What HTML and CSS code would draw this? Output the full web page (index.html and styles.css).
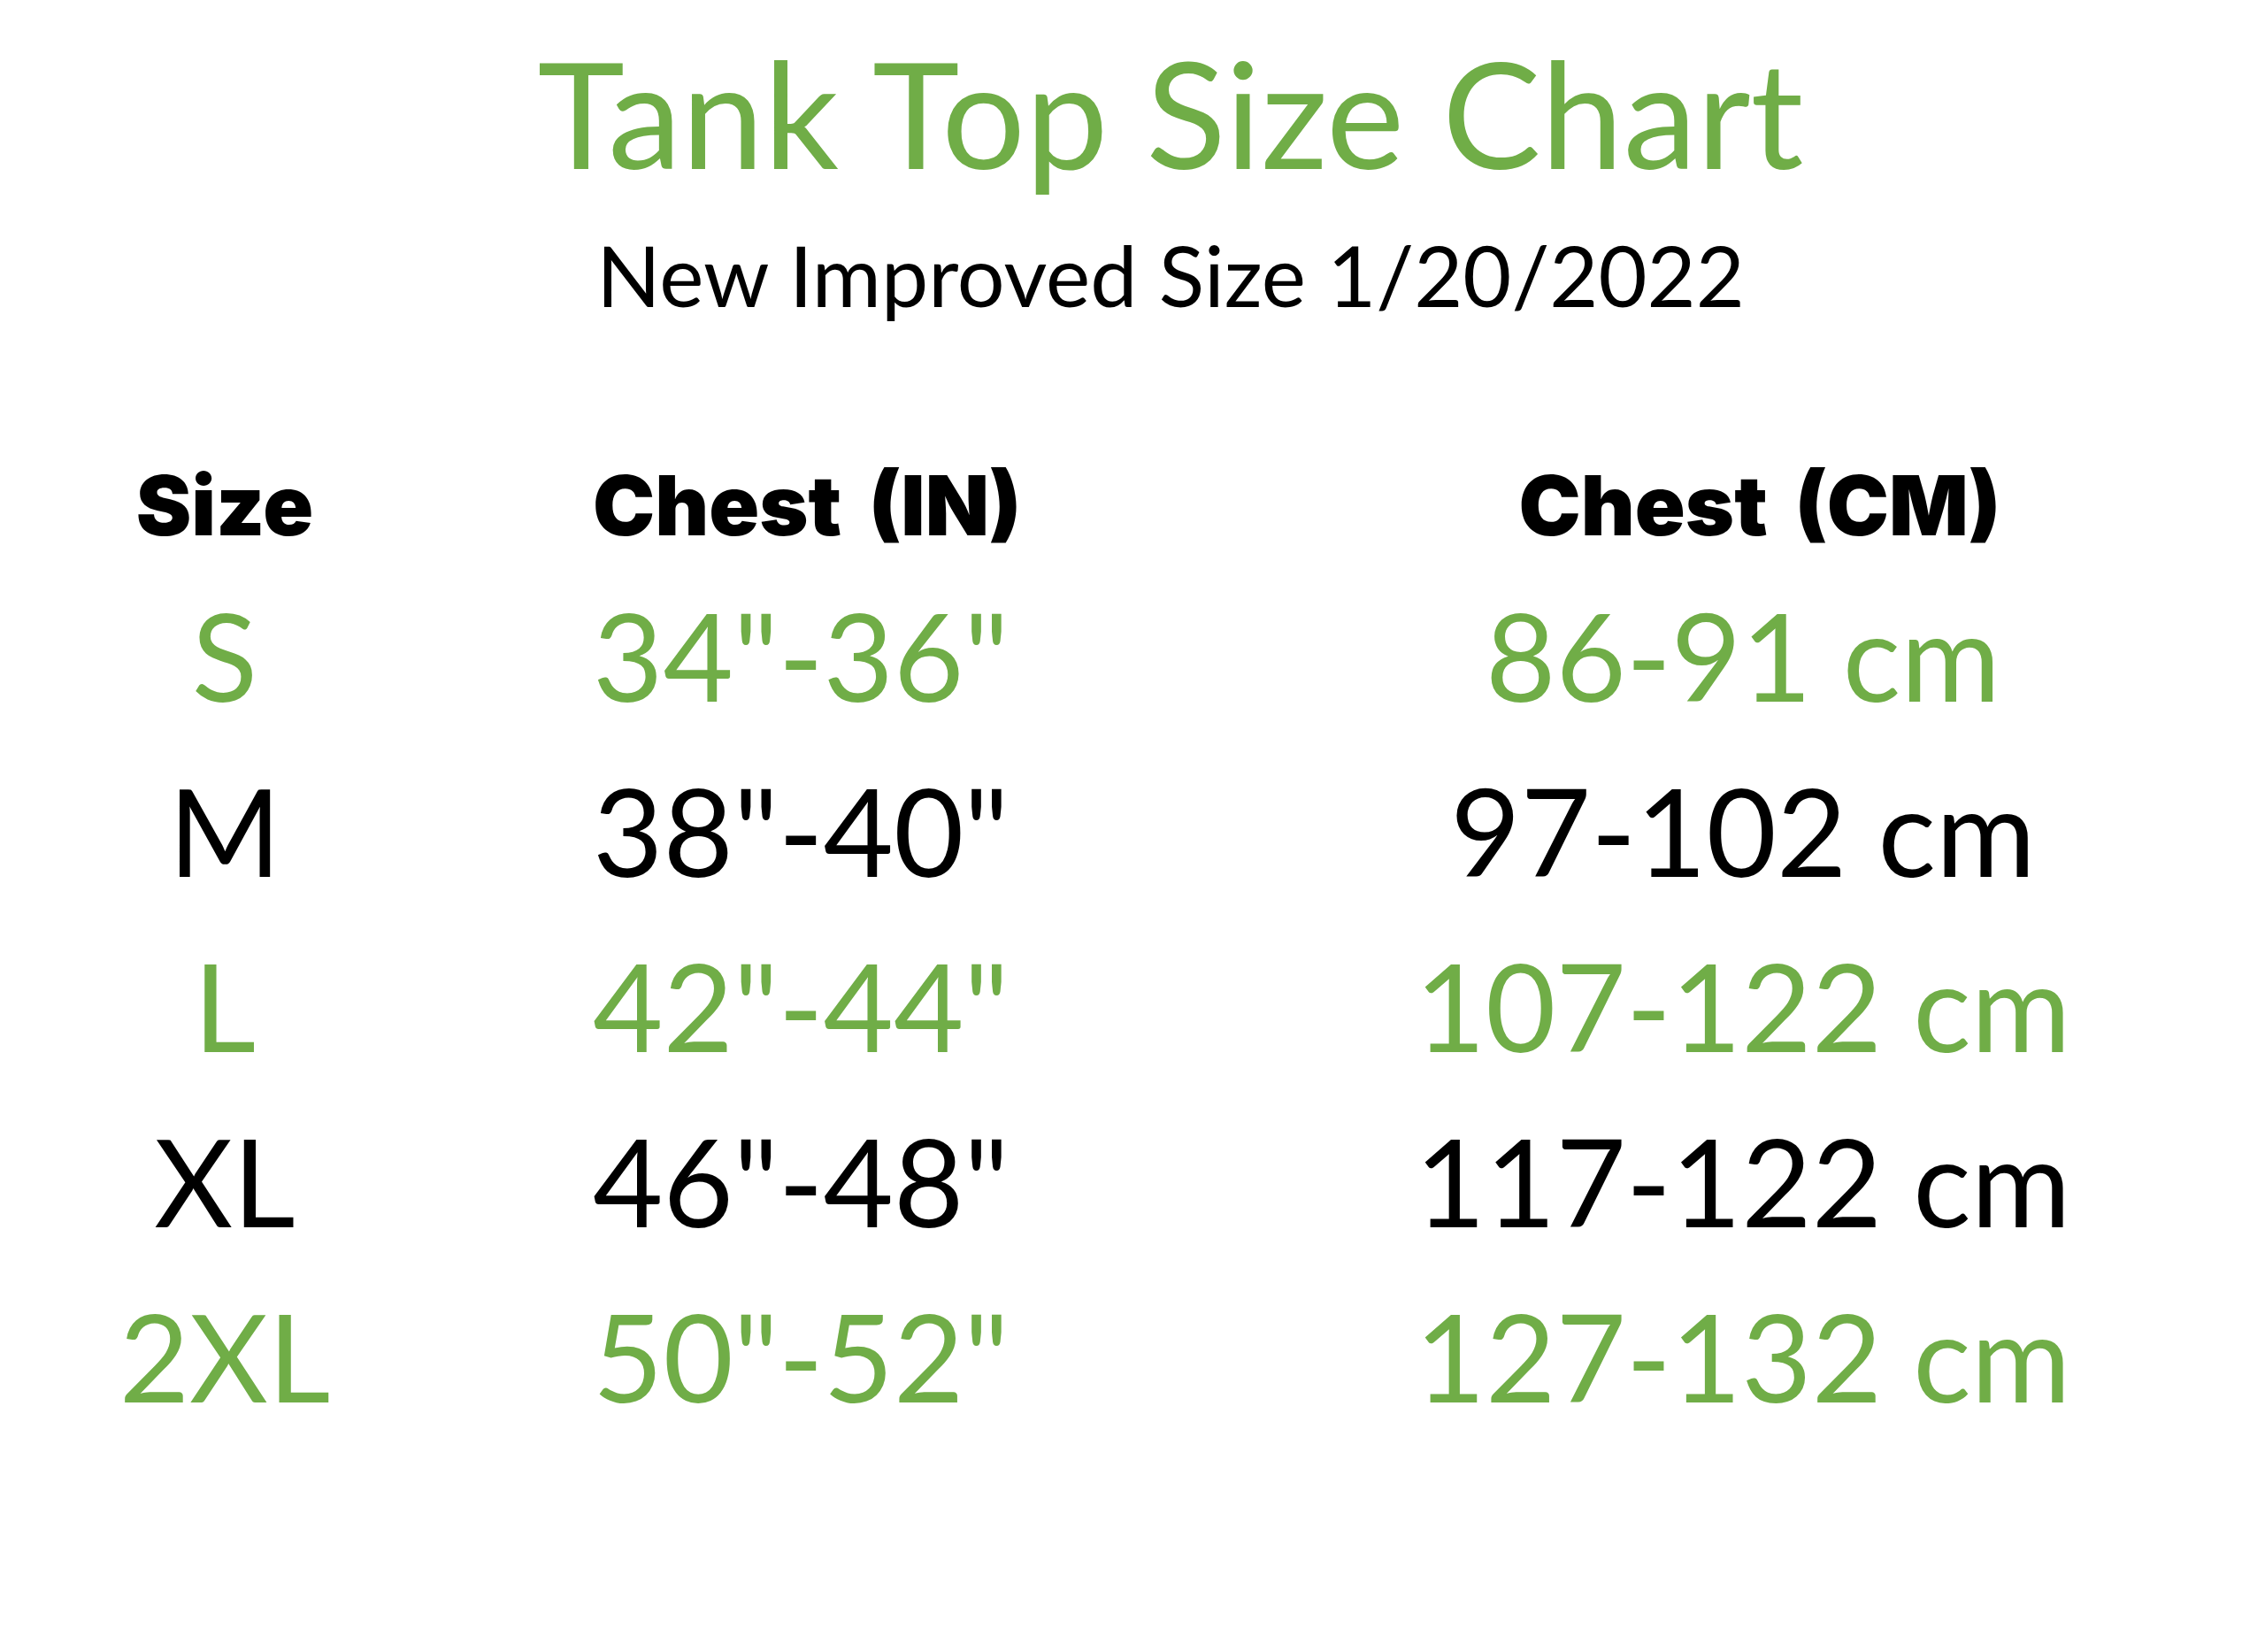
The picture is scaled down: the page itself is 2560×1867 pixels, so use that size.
FILE: index.html
```html
<!DOCTYPE html>
<html lang="en">
<head>
<meta charset="utf-8">
<title>Tank Top Size Chart</title>
<link rel="stylesheet" href="styles.css">
</head>
<body>
<main class="page">
  <header class="heading">
    <h1 class="title">Tank Top Size Chart</h1>
    <p class="subtitle">New Improved Size 1/20/2022</p>
  </header>
  <section class="chart">
    <div class="cell head c-size">Size</div>
    <div class="cell head c-in">Chest (IN)</div>
    <div class="cell head c-cm head-cm">Chest (CM)</div>

    <div class="cell val green c-size">S</div>
    <div class="cell val green c-in">34"-36"</div>
    <div class="cell val green c-cm">86-91 cm</div>

    <div class="cell val c-size">M</div>
    <div class="cell val c-in">38"-40"</div>
    <div class="cell val c-cm">97-102 cm</div>

    <div class="cell val green c-size">L</div>
    <div class="cell val green c-in">42"-44"</div>
    <div class="cell val green c-cm">107-122 cm</div>

    <div class="cell val c-size">XL</div>
    <div class="cell val c-in">46"-48"</div>
    <div class="cell val c-cm">117-122 cm</div>

    <div class="cell val green c-size">2XL</div>
    <div class="cell val green c-in">50"-52"</div>
    <div class="cell val green c-cm">127-132 cm</div>
  </section>
</main>
</body>
</html>
```
FILE: styles.css
```css
html, body {
  margin: 0;
  padding: 0;
  background: #ffffff;
}
.page {
  width: 2560px;
  height: 1867px;
  font-family: Lato, "Open Sans", sans-serif;
  color: #000;
  overflow: hidden;
}
.heading {
  display: flex;
  flex-direction: column;
  align-items: center;
  padding-left: 86px;
}
.title {
  margin: 0;
  padding-top: 37px;
  font-weight: 400;
  font-size: 167px;
  line-height: 180px;
  color: #70ad47;
}
.subtitle {
  margin: 23px 0 0;
  font-size: 95px;
  line-height: 140px;
}
.chart {
  display: grid;
  grid-template-columns: 508px 992px 940px;
  margin-top: 121px;
}
.cell {
  white-space: nowrap;
}
.head {
  font-family: Inter, "Liberation Sans", sans-serif;
  font-weight: 900;
  font-size: 94px;
  line-height: 140px;
  word-spacing: 12px;
}
.val {
  font-size: 137px;
  line-height: 198px;
}
.green {
  color: #70ad47;
}
.c-size {
  text-align: center;
}
.c-in {
  padding-left: 162px;
}
.c-cm {
  text-align: center;
}
.head-cm {
  padding-left: 38px;
}
```
